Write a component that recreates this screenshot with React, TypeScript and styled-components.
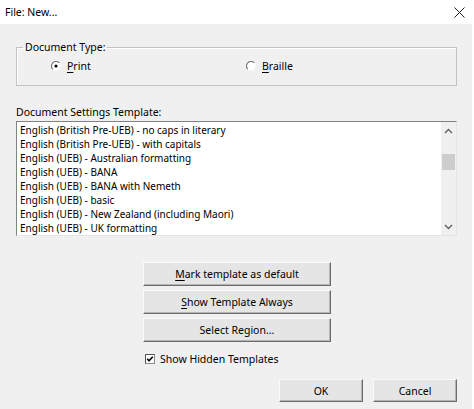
import React, { FC } from 'react';
import styled, { createGlobalStyle } from 'styled-components';

const GlobalStyle = createGlobalStyle`
    html, body {
        margin: 0;
        padding: 0;
        background: #ffffff;
    }
    body {
        font-family: "Noto Sans", "Open Sans", sans-serif;
        font-size: 10.5px;
        color: #000000;
    }
`;

const Window = styled.div`
    width: 474px;
    height: 409px;
    display: flex;
    flex-direction: column;
    background: #ffffff;
    overflow: hidden;
`;

const TitleBar = styled.div`
    height: 24px;
    display: flex;
    align-items: center;
    justify-content: space-between;
    padding: 0 9px 0 5px;
    font-size: 10.5px;
    background: #ffffff;
`;

const Client = styled.div`
    flex: 1;
    width: 472px;
    box-sizing: border-box;
    background: #f0f0f0;
    padding: 0 15px 0 16px;
    display: flex;
    flex-direction: column;
`;

const GroupBox = styled.fieldset`
    margin: 16px 0 0 0;
    padding: 0 0 12px 0;
    border: 1px solid #c2c2c2;
    box-shadow: inset 1px 1px 0 #ffffff;
    min-width: 0;
`;

const Legend = styled.legend`
    margin-left: 6px;
    padding: 0 2px;
    line-height: 14px;
`;

const RadioRow = styled.div`
    display: grid;
    grid-template-columns: 195px 1fr;
    padding-left: 34px;
    margin-top: 5px;
    height: 14px;
    align-items: center;
`;

const Choice = styled.label`
    display: flex;
    align-items: center;
    gap: 6px;
    line-height: 14px;
`;

const Key = styled.span`
    text-decoration: underline;
    text-underline-offset: 2px;
`;

const FieldLabel = styled.div`
    margin-top: 19px;
    line-height: 14px;
`;

const ListBox = styled.div`
    margin-top: 2px;
    height: 115px;
    box-sizing: border-box;
    display: flex;
    background: #ffffff;
    border-top: 1px solid #828282;
    border-left: 1px solid #828282;
    border-right: 1px solid #e4e4e4;
    border-bottom: 1px solid #e4e4e4;
`;

const Items = styled.ul`
    flex: 1;
    list-style: none;
    margin: 0;
    padding: 1px 0 0 3px;
    overflow: hidden;
    font-size: 10px;
`;

const Item = styled.li`
    height: 14px;
    line-height: 14px;
    white-space: nowrap;
`;

const ScrollBar = styled.div`
    width: 15px;
    display: flex;
    flex-direction: column;
    align-items: center;
    background: #f0f0f0;
    padding: 6px 0 5px;
    box-sizing: border-box;
`;

const ScrollTrack = styled.div`
    flex: 1;
    width: 100%;
    padding-top: 20px;
    box-sizing: border-box;
`;

const Thumb = styled.div`
    width: 13px;
    height: 16px;
    margin: 0 auto;
    background: #cdcdcd;
`;

const ButtonStack = styled.div`
    margin: 26px 0 0 127px;
    width: 188px;
    display: flex;
    flex-direction: column;
    gap: 4px;
`;

const Button = styled.button<{ $width?: number }>`
    width: ${(p) => (p.$width ? `${p.$width}px` : '100%')};
    height: ${(p) => (p.$width ? 23 : 24)}px;
    padding: 0;
    font: inherit;
    color: #000000;
    background: #e5e5e5;
    border-top: 1px solid #fbfbfb;
    border-left: 1px solid #fbfbfb;
    border-right: 1px solid #6d6d6d;
    border-bottom: 1px solid #6d6d6d;
    box-shadow: inset -1px -1px 0 #b4b4b4;
`;

const CheckRow = styled.label`
    margin: 6px 0 0 2px;
    display: flex;
    align-items: center;
    gap: 5px;
    line-height: 14px;
`;

const Footer = styled.div`
    margin-top: 13px;
    display: flex;
    justify-content: flex-end;
    gap: 10px;
`;

const RadioIcon: FC<{ checked?: boolean }> = ({ checked }) => (
    <svg width="10" height="10" viewBox="0 0 10 10">
        <circle cx="5" cy="5" r="4.5" fill="#ffffff" />
        <path d="M1.8 8.2 A4.5 4.5 0 0 1 8.2 1.8" fill="none" stroke="#7a7a7a" strokeWidth="1.2" />
        {checked && <circle cx="5" cy="5" r="1.6" fill="#000000" />}
    </svg>
);

const CheckIcon: FC = () => (
    <svg width="10" height="10" viewBox="0 0 10 10">
        <rect x="0.5" y="0.5" width="9" height="9" fill="#ffffff" stroke="#8a8a8a" />
        <path d="M0.5 9.5 V0.5 H9.5" fill="none" stroke="#505050" />
        <path d="M2.2 4.8 L4 6.8 L7.8 2.8" fill="none" stroke="#000000" strokeWidth="1.6" />
    </svg>
);

const Chevron: FC<{ up?: boolean }> = ({ up }) => (
    <svg width="9" height="6" viewBox="0 0 9 6">
        <path d={up ? 'M1 5 L4.5 1.5 L8 5' : 'M1 1 L4.5 4.5 L8 1'} fill="none" stroke="#606060" strokeWidth="1.4" />
    </svg>
);

const CloseIcon: FC = () => (
    <svg width="11" height="11" viewBox="0 0 11 11">
        <path d="M0.5 0.5 L10.5 10.5 M10.5 0.5 L0.5 10.5" stroke="#202020" strokeWidth="1" />
    </svg>
);

const templates = [
    'English (British Pre-UEB) - no caps in literary',
    'English (British Pre-UEB) - with capitals',
    'English (UEB) - Australian formatting',
    'English (UEB) - BANA',
    'English (UEB) - BANA with Nemeth',
    'English (UEB) - basic',
    'English (UEB) - New Zealand (including Maori)',
    'English (UEB) - UK formatting',
];

const App: FC = () => (
    <>
        <GlobalStyle />
        <Window>
            <TitleBar>
                <span>File: New...</span>
                <CloseIcon />
            </TitleBar>
            <Client>
                <GroupBox>
                    <Legend>Document Type:</Legend>
                    <RadioRow>
                        <Choice>
                            <RadioIcon checked />
                            <span>
                                <Key>P</Key>rint
                            </span>
                        </Choice>
                        <Choice>
                            <RadioIcon />
                            <span>
                                <Key>B</Key>raille
                            </span>
                        </Choice>
                    </RadioRow>
                </GroupBox>
                <FieldLabel>Document Settings Template:</FieldLabel>
                <ListBox>
                    <Items>
                        {templates.map((t) => (
                            <Item key={t}>{t}</Item>
                        ))}
                    </Items>
                    <ScrollBar>
                        <Chevron up />
                        <ScrollTrack>
                            <Thumb />
                        </ScrollTrack>
                        <Chevron />
                    </ScrollBar>
                </ListBox>
                <ButtonStack>
                    <Button>
                        <Key>M</Key>ark template as default
                    </Button>
                    <Button>
                        <Key>S</Key>how Template Always
                    </Button>
                    <Button>Select Region...</Button>
                    <CheckRow>
                        <CheckIcon />
                        <span>Show Hidden Templates</span>
                    </CheckRow>
                </ButtonStack>
                <Footer>
                    <Button $width={84}>OK</Button>
                    <Button $width={84}>Cancel</Button>
                </Footer>
            </Client>
        </Window>
    </>
);

export default App;
